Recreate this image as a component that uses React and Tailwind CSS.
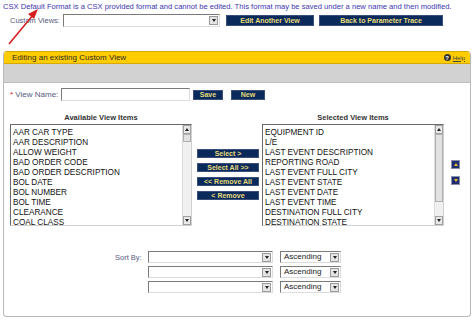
import React from "react";

const available = [
  "AAR CAR TYPE",
  "AAR DESCRIPTION",
  "ALLOW WEIGHT",
  "BAD ORDER CODE",
  "BAD ORDER DESCRIPTION",
  "BOL DATE",
  "BOL NUMBER",
  "BOL TIME",
  "CLEARANCE",
  "COAL CLASS",
];

const selected = [
  "EQUIPMENT ID",
  "L/E",
  "LAST EVENT DESCRIPTION",
  "REPORTING ROAD",
  "LAST EVENT FULL CITY",
  "LAST EVENT STATE",
  "LAST EVENT DATE",
  "LAST EVENT TIME",
  "DESTINATION FULL CITY",
  "DESTINATION STATE",
];

const NavyButton = ({ children, className = "" }) => (
  <div
    className={`bg-[#0b2a5c] border border-[#3a4f7a] text-[#e6dc7a] text-[7px] font-bold leading-none flex items-center justify-center whitespace-nowrap ${className}`}
  >
    {children}
  </div>
);

const DropArrow = () => (
  <div className="w-[9px] h-[9px] bg-[#e4e4e4] border border-[#9a9a9a] flex items-center justify-center">
    <div className="w-0 h-0 border-l-[2px] border-r-[2px] border-t-[3px] border-l-transparent border-r-transparent border-t-[#222]" />
  </div>
);

const FakeSelect = ({ className = "", value = "" }) => (
  <div
    className={`h-[12px] bg-white border-l border-t border-[#7a7a7a] border-r border-b border-r-[#dcdcdc] border-b-[#dcdcdc] flex items-center justify-between pl-[3px] pr-[1px] ${className}`}
  >
    <span className="text-[8px] text-[#222] leading-none">{value}</span>
    <DropArrow />
  </div>
);

const ListBox = ({ items, thumbClass }) => (
  <div className="w-[182px] h-[102px] border-l border-t border-[#6a6a6a] border-r border-b border-r-[#d0d0d0] border-b-[#d0d0d0] bg-white flex overflow-hidden">
    <div className="flex-1 pl-[2px] pt-[3px]">
      {items.map((it) => (
        <div key={it} className="text-[8.2px] leading-[10px] text-[#111] whitespace-nowrap">
          {it}
        </div>
      ))}
    </div>
    <div className="w-[9px] bg-[#f0f0f0] border-l border-[#dcdcdc] flex flex-col">
      <div className="h-[9px] bg-[#e8e8e8] border border-[#a0a0a0] flex items-center justify-center">
        <div className="w-0 h-0 border-l-[2px] border-r-[2px] border-b-[3px] border-l-transparent border-r-transparent border-b-[#222]" />
      </div>
      <div className="flex-1 flex flex-col">
        <div className={`bg-[#e2e2e2] border border-[#b0b0b0] ${thumbClass}`} />
      </div>
      <div className="h-[9px] bg-[#e8e8e8] border border-[#a0a0a0] flex items-center justify-center">
        <div className="w-0 h-0 border-l-[2px] border-r-[2px] border-t-[3px] border-l-transparent border-r-transparent border-t-[#222]" />
      </div>
    </div>
  </div>
);

export default function App() {
  return (
    <div
      className="relative w-[474px] h-[321px] bg-white overflow-hidden"
      style={{ fontFamily: '"Liberation Sans", Arial, sans-serif' }}
    >
      {/* notice */}
      <div className="pl-[3px] pt-[2px] text-[7.6px] leading-[10px] text-[#3b35b0] whitespace-nowrap">
        CSX Default Format is a CSX provided format and cannot be edited. This format may be saved under a new name and then modified.
      </div>

      {/* custom views row */}
      <div className="flex items-center mt-[2px] pl-[10px] h-[13px]">
        <span className="text-[7.5px] text-[#555a80] w-[53px] whitespace-nowrap">Custom Views:</span>
        <FakeSelect className="w-[157px] h-[13px]" />
        <NavyButton className="ml-[6px] w-[88px] h-[11px]">Edit Another View</NavyButton>
        <NavyButton className="ml-[5px] w-[124px] h-[11px]">Back to Parameter Trace</NavyButton>
      </div>

      {/* panel */}
      <div className="mx-[3px] mt-[24px] h-[266px] border border-[#b9b9b9] border-t-[#d6a900] rounded-[4px] overflow-hidden flex flex-col">
        <div className="h-[12px] bg-[#ffcc00] border-b border-[#d6a900] flex items-center justify-between pl-[8px] pr-[5px]">
          <span className="text-[8px] text-[#2a2a2a] leading-none">Editing an existing Custom View</span>
          <span className="flex items-center gap-[2px]">
            <span className="w-[7px] h-[7px] rounded-full bg-[#333] text-white text-[6px] font-bold leading-none flex items-center justify-center">?</span>
            <span className="text-[6px] text-[#444] underline leading-none">Help</span>
          </span>
        </div>
        <div className="h-[19px] bg-[#d2d2d2] border-b border-[#bdbdbd]" />

        {/* view name */}
        <div className="flex items-center mt-[5px] pl-[6px] h-[13px]">
          <span className="text-[8px] text-[#555a80] w-[51px] whitespace-nowrap">
            <span className="text-[#d02020]">*</span> View Name:
          </span>
          <div className="w-[129px] h-[13px] bg-white border-l border-t border-[#7a7a7a] border-r border-b border-r-[#dcdcdc] border-b-[#dcdcdc]" />
          <NavyButton className="ml-[3px] w-[30px] h-[10px]">Save</NavyButton>
          <NavyButton className="ml-[8px] w-[34px] h-[10px]">New</NavyButton>
        </div>

        {/* lists */}
        <div className="flex mt-[18px] pl-[6px]">
          <div className="flex flex-col">
            <div className="text-[7.5px] font-bold text-[#333] text-center leading-[10px] h-[10px] -mt-[6px] mb-[1px]">
              Available View Items
            </div>
            <ListBox items={available} thumbClass="h-[8px]" />
          </div>
          <div className="flex flex-col gap-[4px] ml-[5px] mt-[30px] w-[62px]">
            <NavyButton className="h-[9px]">Select &gt;</NavyButton>
            <NavyButton className="h-[9px] mt-[1px]">Select All &gt;&gt;</NavyButton>
            <NavyButton className="h-[9px] mt-[1px]">&lt;&lt; Remove All</NavyButton>
            <NavyButton className="h-[9px] mt-[1px]">&lt; Remove</NavyButton>
          </div>
          <div className="flex flex-col ml-[3px]">
            <div className="text-[7.5px] font-bold text-[#333] text-center leading-[10px] h-[10px] -mt-[6px] mb-[1px]">
              Selected View Items
            </div>
            <ListBox items={selected} thumbClass="h-[68px]" />
          </div>
          <div className="flex flex-col gap-[7px] ml-[7px] mt-[41px]">
            <div className="w-[9px] h-[9px] bg-[#1f2d6e] border border-[#8a8fb0] flex items-center justify-center">
              <div className="w-0 h-0 border-l-[2px] border-r-[2px] border-b-[3px] border-l-transparent border-r-transparent border-b-[#e6c030]" />
            </div>
            <div className="w-[9px] h-[9px] bg-[#1f2d6e] border border-[#8a8fb0] flex items-center justify-center">
              <div className="w-0 h-0 border-l-[2px] border-r-[2px] border-t-[3px] border-l-transparent border-r-transparent border-t-[#e6c030]" />
            </div>
          </div>
        </div>

        {/* sort by */}
        <div className="flex mt-[25px] pl-[111px]">
          <span className="text-[7.5px] text-[#555a80] w-[33px] pt-[1px]">Sort By:</span>
          <div className="flex flex-col gap-[3px]">
            {[0, 1, 2].map((i) => (
              <div key={i} className="flex items-center">
                <FakeSelect className="w-[125px]" />
                <FakeSelect className="ml-[7px] w-[61px]" value="Ascending" />
              </div>
            ))}
          </div>
        </div>
      </div>

      {/* red annotation arrow */}
      <svg className="absolute left-0 top-0 pointer-events-none" width="60" height="60">
        <line x1="9" y1="44" x2="33" y2="15" stroke="#d42020" strokeWidth="1.6" />
        <polygon points="38,9 28,14 34,19" fill="#d42020" />
      </svg>
    </div>
  );
}
